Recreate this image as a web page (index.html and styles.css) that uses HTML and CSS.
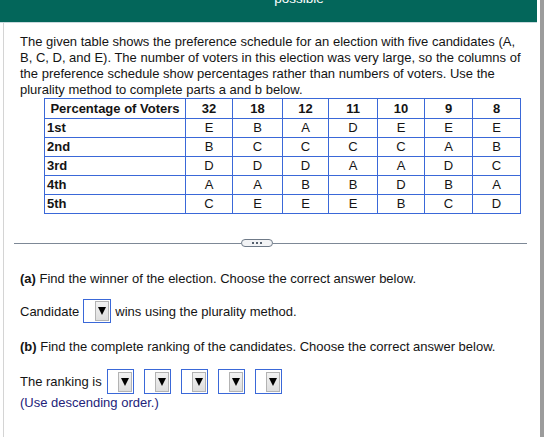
FILE: index.html
```html
<!DOCTYPE html>
<html>
<head>
<meta charset="utf-8">
<link rel="stylesheet" href="styles.css">
</head>
<body>
<div class="frame">
  <div class="main">
    <div class="topbar"><span class="topbar-text">possible</span></div>
    <div class="content">
      <p class="intro">The given table shows the preference schedule for an election with five candidates (A, B, C, D, and E). The number of voters in this election was very large, so the columns of the preference schedule show percentages rather than numbers of voters. Use the plurality method to complete parts a and b below.</p>
      <table class="schedule">
        <colgroup>
          <col class="c-label"><col class="c32"><col class="c18"><col class="c12"><col class="c11"><col class="c10"><col class="c9"><col class="c8">
        </colgroup>
        <tr class="head"><th>Percentage of Voters</th><th>32</th><th>18</th><th>12</th><th>11</th><th>10</th><th>9</th><th>8</th></tr>
        <tr><th class="rl">1st</th><td>E</td><td>B</td><td>A</td><td>D</td><td>E</td><td>E</td><td>E</td></tr>
        <tr><th class="rl">2nd</th><td>B</td><td>C</td><td>C</td><td>C</td><td>C</td><td>A</td><td>B</td></tr>
        <tr><th class="rl">3rd</th><td>D</td><td>D</td><td>D</td><td>A</td><td>A</td><td>D</td><td>C</td></tr>
        <tr><th class="rl">4th</th><td>A</td><td>A</td><td>B</td><td>B</td><td>D</td><td>B</td><td>A</td></tr>
        <tr><th class="rl">5th</th><td>C</td><td>E</td><td>E</td><td>E</td><td>B</td><td>C</td><td>D</td></tr>
      </table>
      <div class="divider">
        <span class="rule rule-left"></span>
        <span class="pill"><span class="dot"></span><span class="dot"></span><span class="dot"></span></span>
        <span class="rule rule-right"></span>
      </div>
      <p class="q qa"><b>(a)</b> Find the winner of the election. Choose the correct answer below.</p>
      <div class="answer-row ar-a">
        <span>Candidate</span>
        <span class="dd"><span class="dd-btn"><span class="tri"></span></span></span>
        <span>wins using the plurality method.</span>
      </div>
      <p class="q qb"><b>(b)</b> Find the complete ranking of the candidates. Choose the correct answer below.</p>
      <div class="answer-row ar-b">
        <span class="lbl">The ranking is</span>
        <span class="dds">
          <span class="dd"><span class="dd-btn"><span class="tri"></span></span></span>
          <span class="dd"><span class="dd-btn"><span class="tri"></span></span></span>
          <span class="dd"><span class="dd-btn"><span class="tri"></span></span></span>
          <span class="dd"><span class="dd-btn"><span class="tri"></span></span></span>
          <span class="dd"><span class="dd-btn"><span class="tri"></span></span></span>
        </span>
      </div>
      <p class="hint">(Use descending order.)</p>
    </div>
  </div>
  <div class="gutter"></div>
  <div class="scrollbar"></div>
</div>
</body>
</html>
```
FILE: styles.css
```css
html, body {
  margin: 0;
  padding: 0;
  background: #fff;
}
body {
  font-family: "Liberation Sans", Arial, sans-serif;
  font-size: 13px;
  color: #141414;
}
.frame {
  display: flex;
  height: 437px;
  overflow: hidden;
}
.main {
  width: 537px;
  display: flex;
  flex-direction: column;
}
.gutter {
  width: 3px;
}
.scrollbar {
  width: 4px;
  background: #9c9c9c;
}
.topbar {
  height: 22px;
  background: #03665a;
  border-bottom: 1px solid #c9d9dd;
  text-align: center;
  overflow: hidden;
  padding-left: 61px;
}
.topbar-text {
  display: block;
  color: #fff;
  font-size: 13.5px;
  line-height: 16px;
  margin-top: -9px;
}
.content {
  flex: 1;
  margin-left: 3px;
  border-left: 1px solid #d4d4d4;
  padding: 11px 0 0 16px;
}
.intro {
  margin: 0;
  width: 506px;
  line-height: 16px;
}
.schedule {
  border-collapse: collapse;
  table-layout: fixed;
  width: 477px;
  margin-left: 24px;
}
.schedule th, .schedule td {
  border: 1px solid #3a68d8;
  padding: 0;
  height: 18px;
  line-height: 16px;
  text-align: center;
}
.schedule td {
  font-weight: normal;
}
.schedule .head th {
  height: 19px;
  font-weight: bold;
}
.schedule th.rl {
  text-align: left;
  padding-left: 2px;
}
.c-label { width: 141px; }
.c32 { width: 47px; }
.c18 { width: 50px; }
.c12 { width: 46px; }
.c11 { width: 49px; }
.c10 { width: 47px; }
.c9 { width: 48px; }
.c8 { width: 48px; }
.divider {
  display: flex;
  align-items: center;
  margin: 25px 0 0 -6px;
  width: 513px;
  height: 8px;
}
.rule {
  height: 1px;
  background: #7d8896;
}
.rule-left {
  width: 227px;
}
.rule-right {
  flex: 1;
}
.pill {
  width: 30px;
  height: 6px;
  border: 1px solid #6f7a88;
  border-radius: 4px;
  background: #f2f3f5;
  display: flex;
  align-items: center;
  justify-content: center;
  gap: 2px;
}
.dot {
  width: 2px;
  height: 2px;
  background: #55606e;
}
.q {
  margin: 0;
  line-height: 16px;
}
.qa {
  margin-top: 24px;
}
.answer-row {
  display: flex;
  align-items: center;
}
.ar-a {
  margin-top: 12px;
  gap: 4px;
  height: 24px;
}
.qb {
  margin-top: 16px;
}
.ar-b {
  margin-top: 14px;
  height: 25px;
  gap: 5px;
}
.dds {
  display: flex;
  gap: 10px;
}
.dd {
  box-sizing: border-box;
  width: 28px;
  height: 24px;
  border: 1px solid #3a68d8;
  background: #fff;
  display: flex;
  justify-content: flex-end;
  align-items: center;
  padding-right: 1px;
}
.ar-b .dd {
  width: 27px;
  height: 25px;
}
.dd-btn {
  box-sizing: border-box;
  width: 14px;
  height: 20px;
  background: linear-gradient(#f2f2f2, #dedede);
  border: 1px solid #b3b3b3;
  display: flex;
  align-items: center;
  justify-content: center;
}
.tri {
  width: 0;
  height: 0;
  border-left: 4px solid transparent;
  border-right: 4px solid transparent;
  border-top: 8px solid #000;
}
.hint {
  margin: 1px 0 0;
  line-height: 16px;
  color: #23237a;
}
```
